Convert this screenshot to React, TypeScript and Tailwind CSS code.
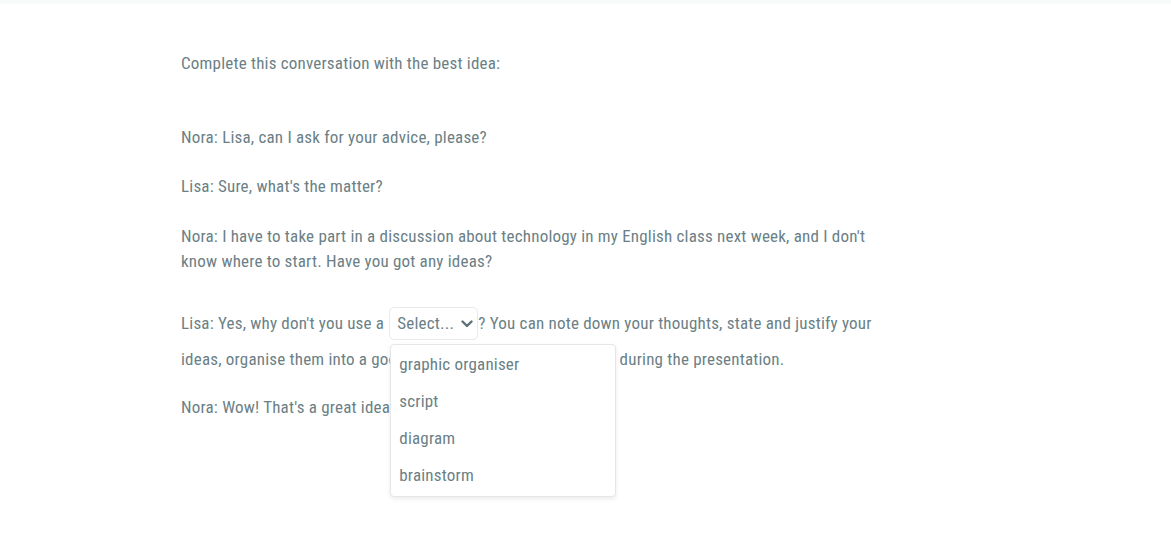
const options = ["graphic organiser", "script", "diagram", "brainstorm"];

function ChevronDown() {
  return (
    <svg width="12" height="8" viewBox="0 0 12 8" className="ml-[7px] mt-[2px] text-[#5b7077]">
      <path d="M1.5 1.5 L6 6 L10.5 1.5" fill="none" stroke="currentColor" strokeWidth="2.4" strokeLinecap="round" strokeLinejoin="round" />
    </svg>
  );
}

function SelectBox() {
  return (
    <span className="relative my-[-6px] inline-block -translate-y-[2px] align-middle">
      <span className="inline-flex h-[33px] w-[89px] items-center rounded-[5px] border border-[#e6eaeb] bg-white pl-[7px] leading-none">
        <span>Select...</span>
        <ChevronDown />
      </span>
      <div className="absolute left-[1px] top-[39px] z-10 w-[226px] rounded-[4px] border border-[#e3e7e8] bg-white pt-[1px] pb-[2px] shadow-[0_2px_4px_rgba(0,0,0,0.08)]">
        {options.map((o) => (
          <div key={o} className="px-[8px] py-[6px] leading-[25px] whitespace-nowrap">
            {o}
          </div>
        ))}
      </div>
    </span>
  );
}

export default function App() {
  return (
    <div
      className="min-h-[559px] bg-white text-[17px] tracking-[0.2px] text-[#6b7f86]"
      style={{ fontFamily: '"Roboto Condensed", "DejaVu Sans Condensed", sans-serif' }}
    >
      <div className="h-[4px] bg-[#f8fbfa]" />
      <div className="ml-[181px] w-[705px] pt-[47px] leading-[25px]">
        <p>Complete this conversation with the best idea:</p>
        <p className="mt-[49px]">Nora: Lisa, can I ask for your advice, please?</p>
        <p className="mt-[24px]">Lisa: Sure, what's the matter?</p>
        <p className="mt-[25px]">
          Nora: I have to take part in a discussion about technology in my English class next week, and I don't know
          where to start. Have you got any ideas?
        </p>
        <p className="mt-[31px] leading-[36px]">
          Lisa: Yes, why don't you use a <span className="inline-block w-[1px]" />
          <SelectBox />? You can note down your thoughts, state and justify your ideas, organise them into a good
          structure and refer to them all during the presentation.
        </p>
        <p className="mt-[18px]">Nora: Wow! That's a great idea. Thanks!</p>
      </div>
    </div>
  );
}
